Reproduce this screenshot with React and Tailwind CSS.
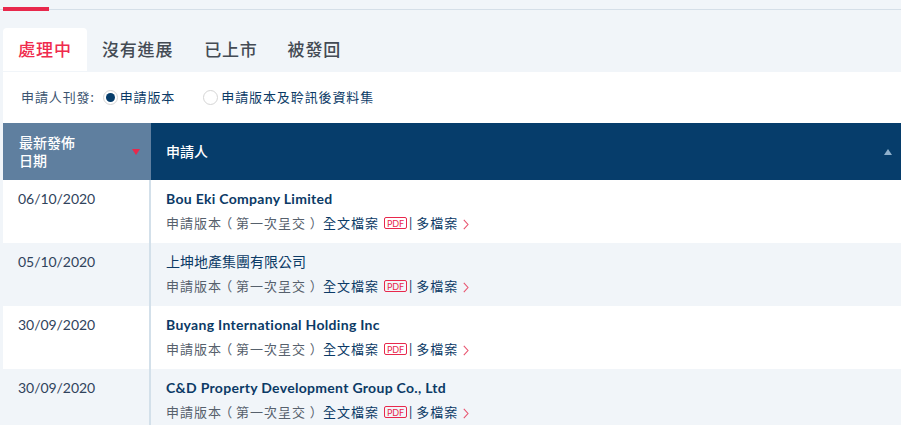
import React from "react";

const cjk = "font-['Lato','Noto_Sans_CJK_TC','Noto_Sans_CJK_SC',sans-serif]";

const rows = [
  { date: "06/10/2020", name: "Bou Eki Company Limited", bold: true },
  { date: "05/10/2020", name: "上坤地產集團有限公司", bold: false },
  { date: "30/09/2020", name: "Buyang International Holding Inc", bold: true },
  { date: "30/09/2020", name: "C&D Property Development Group Co., Ltd", bold: true },
];

function Chevron() {
  return (
    <svg width="6" height="11" viewBox="0 0 6 11" fill="none" className="ml-[5px] mt-[2px] shrink-0">
      <path d="M0.8 0.8L5 5.5L0.8 10.2" stroke="#e8546f" strokeWidth="1.1" />
    </svg>
  );
}

function Paren({ children }) {
  return <span className="inline-block w-[14px] text-center tracking-normal [font-feature-settings:'halt']">{children}</span>;
}

function Row({ row, shaded }) {
  return (
    <div className={`flex h-[63px] shrink-0 ${shaded ? "bg-[#f1f5f9]" : "bg-white"}`}>
      <div className="w-[148px] shrink-0 border-r-2 border-[#d3e0ea] pl-[15px] pt-[9px] text-[14px] leading-[20px] tracking-[-0.05px] text-[#30435c]">
        {row.date}
      </div>
      <div className="flex-1 pl-[15px] pt-[9px]">
        <div className={`text-[14px] leading-[20px] text-[#0b3a66] ${row.bold ? "font-bold tracking-[0.3px]" : "font-normal"}`}>
          {row.name}
        </div>
        <div className="mt-[4px] flex items-center text-[13px] leading-[20px] tracking-[1px] text-[#56606c]">
          <span>
            申請版本<Paren>（</Paren>第一次呈交<Paren>）</Paren>
          </span>
          <span className="ml-[3px] text-[#0b3a66]">全文檔案</span>
          <span className="ml-[5px] flex h-[12px] w-[23px] items-center justify-center rounded-[2px] border border-[#e8284c] text-[9px] leading-none tracking-normal text-[#e8284c]">
            PDF
          </span>
          <span className="ml-[2px] text-[#0b3a66]">|</span>
          <span className="ml-[3px] text-[#0b3a66]">多檔案</span>
          <Chevron />
        </div>
      </div>
    </div>
  );
}

export default function App() {
  return (
    <div className={`h-[425px] w-[901px] overflow-hidden bg-[#f1f5f9] pl-[3px] ${cjk}`}>
      <div className="relative h-[28px]">
        <div className="absolute left-[-3px] right-0 top-[9px] h-px bg-[#d5dfe8]" />
        <div className="absolute left-0 top-[7px] h-[4px] w-[46px] bg-[#e8284c]" />
      </div>

      <div className="flex h-[44px] items-stretch pb-[1px] text-[17px] font-medium tracking-[0.8px] text-[#444b54]">
        <div className="flex w-[84px] items-center justify-center rounded-t-[4px] bg-white text-[#ef2b4d]">處理中</div>
        <div className="ml-[15px] flex items-center">沒有進展</div>
        <div className="ml-[31px] flex items-center">已上市</div>
        <div className="ml-[30px] flex items-center">被發回</div>
      </div>

      <div className="flex h-[51px] items-center bg-white pl-[18px] text-[13px] tracking-[0.9px] text-[#0b3a66]">
        <span className="text-[#3c5470]">申請人刊發:</span>
        <span className="ml-[8px] flex h-[15px] w-[15px] items-center justify-center rounded-full border border-[#d5d5d5] bg-white">
          <span className="h-[9px] w-[9px] rounded-full bg-[#063d6b]" />
        </span>
        <span className="ml-[2px]">申請版本</span>
        <span className="ml-[28px] h-[15px] w-[15px] rounded-full border border-[#d5d5d5] bg-white" />
        <span className="ml-[3px]">申請版本及聆訊後資料集</span>
      </div>

      <div className="flex h-[57px] bg-[#063d6b] text-[14px] font-medium leading-[18px] text-white">
        <div className="relative flex w-[148px] shrink-0 items-center bg-[#5f7f9f] pl-[16px]">
          <div>
            最新發佈
            <br />
            日期
          </div>
          <span className="absolute left-[129px] top-[26px] h-0 w-0 border-x-[4px] border-t-[6px] border-x-transparent border-t-[#e8284c]" />
        </div>
        <div className="relative flex flex-1 items-center pl-[15px]">
          申請人
          <span className="absolute right-[9px] top-[26px] h-0 w-0 border-x-[4px] border-b-[6px] border-x-transparent border-b-[#8fb0cc]" />
        </div>
      </div>

      {rows.map((row, i) => (
        <Row key={i} row={row} shaded={i % 2 === 1} />
      ))}
    </div>
  );
}
